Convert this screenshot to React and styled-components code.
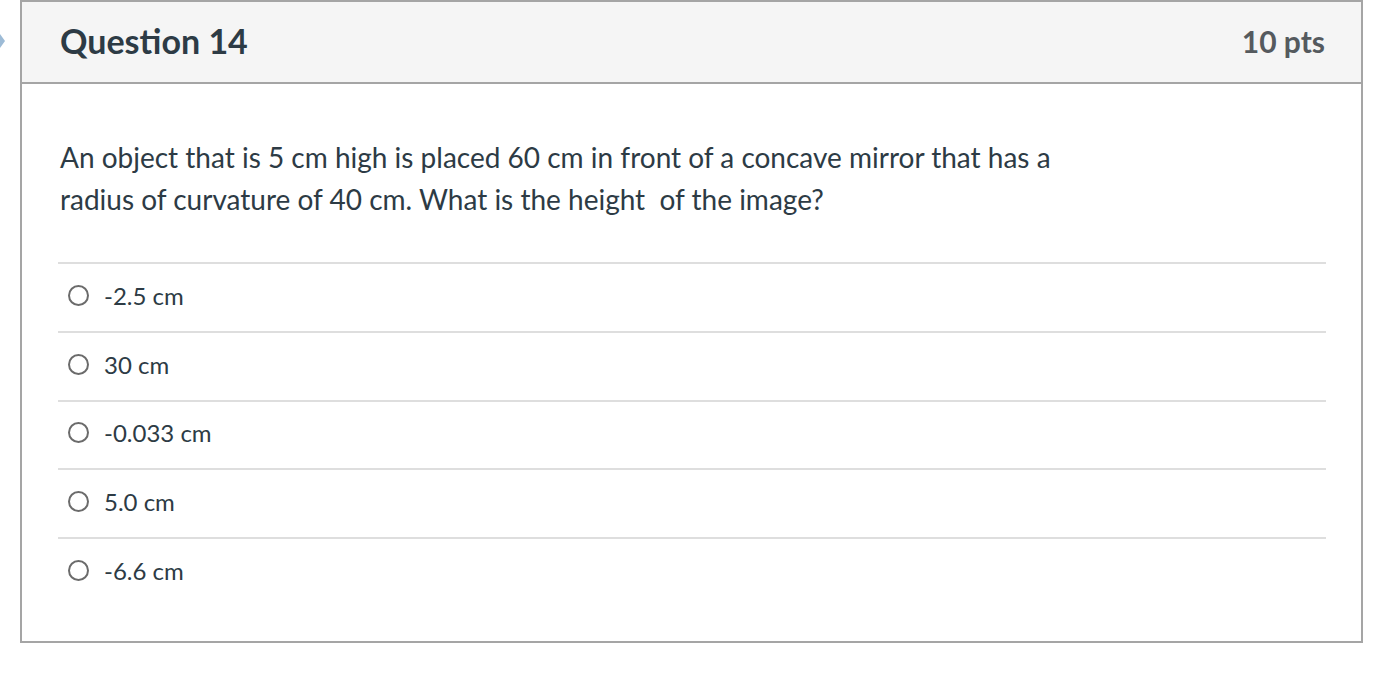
import styled, { createGlobalStyle } from "styled-components";

const GlobalStyle = createGlobalStyle`
body {
    margin: 0;
    background: #fff;
    font-family: Lato, "Noto Sans", sans-serif;
    color: #2d3b45;
}
`

const Page = styled.div`
display: flex;
align-items: flex-start;
width: 1392px;
`

const Gutter = styled.div`
width: 20px;
flex-shrink: 0;
display: flex;
padding-top: 34px;
`

const Card = styled.div`
width: 1339px;
border: 2px solid #a5a5a5;
background: #fff;
`

const Header = styled.div`
box-sizing: border-box;
height: 82px;
background: #f5f5f5;
border-bottom: 2px solid #a5a5a5;
display: flex;
align-items: center;
justify-content: space-between;
padding: 0 36px 3px 38px;
`

const Title = styled.h2`
margin: 0;
font-size: 34px;
font-weight: 700;
color: #2d3b45;
`

const Points = styled.span`
font-size: 30px;
font-weight: 700;
color: #555a5e;
`

const Body = styled.div`
padding: 52px 35px 35px 36px;
`

const Prompt = styled.p`
margin: 0 0 42px 2px;
font-size: 28px;
line-height: 42px;
max-width: 1010px;
`

const Answers = styled.div`
display: flex;
flex-direction: column;
`

const Answer = styled.label`
box-sizing: border-box;
display: flex;
align-items: center;
height: 68.75px;
border-top: 2px solid #dedede;
padding: 0 0 4px 10px;
font-size: 24px;
gap: 15px;
color: #2d3b45;
`

const Radio = styled.span`
width: 17px;
height: 17px;
border-radius: 50%;
border: 2px solid #6b6b6b;
flex-shrink: 0;
`

const answers = ["-2.5 cm", "30 cm", "-0.033 cm", "5.0 cm", "-6.6 cm"]

export default function App() {
    return (
        <>
            <GlobalStyle />
            <Page>
                <Gutter>
                    <svg width="6" height="14" viewBox="0 0 6 14">
                        <path d="M0 0 L5 7 L0 14 Z" fill="#9dbbd6" />
                    </svg>
                </Gutter>
                <Card>
                    <Header>
                        <Title>Question 14</Title>
                        <Points>10 pts</Points>
                    </Header>
                    <Body>
                        <Prompt>
                            An object that is 5 cm high is placed 60 cm in front of a concave mirror that has a radius of curvature of 40 cm. What is the height&nbsp; of the image?
                        </Prompt>
                        <Answers>
                            {answers.map(a => (
                                <Answer key={a}><Radio />{a}</Answer>
                            ))}
                        </Answers>
                    </Body>
                </Card>
            </Page>
        </>
    )
}
